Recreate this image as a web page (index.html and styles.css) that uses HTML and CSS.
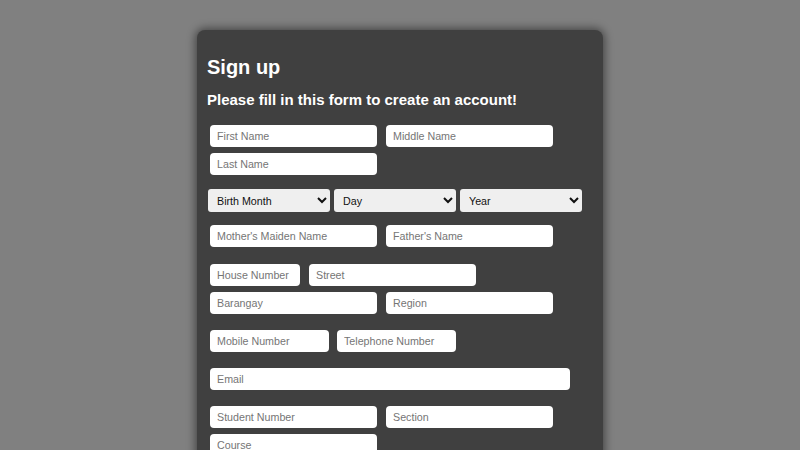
FILE: index.html
```html
<!DOCTYPE html>
<html>
<head>
<meta charset="utf-8">
<title>Sign up</title>
<link rel="stylesheet" href="styles.css">
</head>
<body>
<div class="card">
  <h2 class="title">Sign up</h2>
  <h3 class="subtitle">Please fill in this form to create an account!</h3>
  <form class="form">
    <div class="row first">
      <input class="field w-half" type="text" placeholder="First Name">
      <input class="field w-half" type="text" placeholder="Middle Name">
    </div>
    <div class="row tight">
      <input class="field w-half" type="text" placeholder="Last Name">
    </div>
    <div class="row selects">
      <select class="sel"><option>Birth Month</option></select>
      <select class="sel"><option>Day</option></select>
      <select class="sel"><option>Year</option></select>
    </div>
    <div class="row mid">
      <input class="field w-half" type="text" placeholder="Mother's Maiden Name">
      <input class="field w-half" type="text" placeholder="Father's Name">
    </div>
    <div class="row wide">
      <input class="field w-house" type="text" placeholder="House Number">
      <input class="field w-half" type="text" placeholder="Street">
    </div>
    <div class="row tight">
      <input class="field w-half" type="text" placeholder="Barangay">
      <input class="field w-half" type="text" placeholder="Region">
    </div>
    <div class="row loose phones">
      <input class="field w-phone" type="text" placeholder="Mobile Number">
      <input class="field w-phone" type="text" placeholder="Telephone Number">
    </div>
    <div class="row loose">
      <input class="field w-email" type="text" placeholder="Email">
    </div>
    <div class="row loose">
      <input class="field w-half" type="text" placeholder="Student Number">
      <input class="field w-half" type="text" placeholder="Section">
    </div>
    <div class="row tight">
      <input class="field w-half" type="text" placeholder="Course">
    </div>
  </form>
</div>
</body>
</html>
```
FILE: styles.css
```css
html, body {
  margin: 0;
  padding: 0;
}
body {
  background: #808080;
  font-family: "Liberation Sans", Arial, sans-serif;
  height: 450px;
  overflow: hidden;
}
.card {
  width: 406px;
  box-sizing: border-box;
  margin: 30px auto 0;
  background: #404040;
  border-radius: 8px;
  box-shadow: 0 0 8px 2px rgba(0, 0, 0, 0.45);
  padding: 26px 10px 40px;
  color: #ffffff;
  min-height: 500px;
}
.title {
  margin: 0;
  font-size: 20px;
  line-height: 22px;
  font-weight: bold;
}
.subtitle {
  margin: 13px 0 0;
  font-size: 15px;
  line-height: 17px;
  font-weight: bold;
}
.form {
  display: flex;
  flex-direction: column;
  margin-top: 17px;
}
.row {
  display: flex;
  gap: 9px;
  padding-left: 3px;
}
.row.first { margin-top: 0; }
.row.tight { margin-top: 6px; }
.row.selects {
  margin-top: 14px;
  padding-left: 1px;
  gap: 4px;
}
.row.mid { margin-top: 13px; }
.row.wide { margin-top: 17px; }
.row.loose { margin-top: 16px; }
.row.phones { gap: 8px; }
.field {
  box-sizing: border-box;
  height: 22px;
  margin: 0;
  border: none;
  border-radius: 4px;
  background: #ffffff;
  padding: 0 7px;
  font-family: "Liberation Sans", Arial, sans-serif;
  font-size: 10.7px;
  color: #222222;
  outline: none;
}
.field::placeholder {
  color: #757575;
}
.w-half { width: 167px; }
.w-house { width: 90px; }
.w-phone { width: 119px; }
.w-email { width: 360px; }
.sel {
  box-sizing: border-box;
  width: 122px;
  height: 23px;
  margin: 0;
  border: none;
  border-radius: 3px;
  background-color: #efefef;
  padding: 0 5px;
  font-family: "Liberation Sans", Arial, sans-serif;
  font-size: 10.7px;
  color: #111111;
}
```
